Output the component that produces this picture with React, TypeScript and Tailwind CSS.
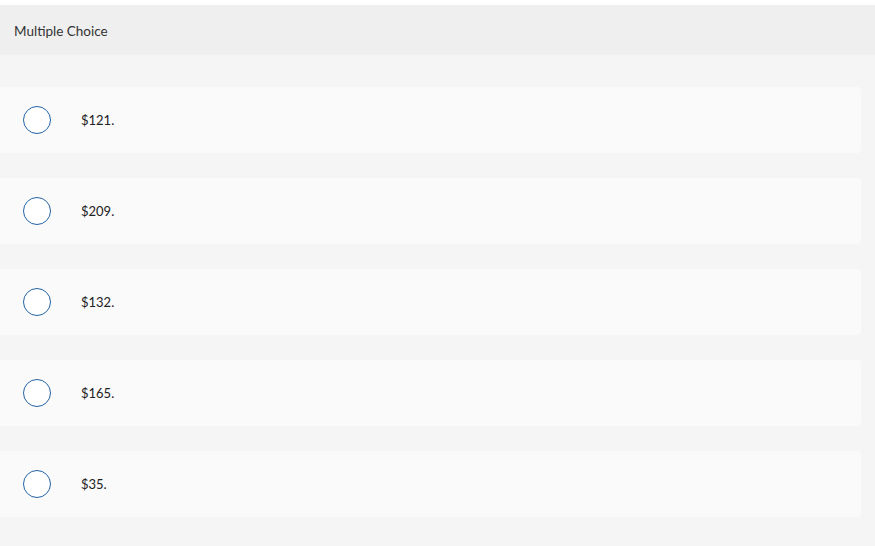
import React from "react";

const options = ["$121.", "$209.", "$132.", "$165.", "$35."];

export default function App() {
  return (
    <div
      className="w-[875px] h-[546px] bg-[#f5f5f5] overflow-hidden"
      style={{ fontFamily: '"Lato", "Open Sans", Arial, sans-serif' }}
    >
      <div className="h-[5px] bg-white" />
      <div className="h-[50px] bg-[#efefef] flex items-center pl-[14px] pt-[2px] text-[13.5px] text-[#333333]">
        Multiple Choice
      </div>
      <div className="flex flex-col gap-[25px] pt-[32px] pr-[14px]">
        {options.map((o) => (
          <div
            key={o}
            className="h-[66px] bg-[#fafafa] rounded-r-[4px] flex items-center pl-[23px]"
          >
            <div className="w-[28px] h-[28px] rounded-full border-[1.5px] border-[#2363a6] bg-white shrink-0" />
            <div className="ml-[30px] pt-[1px] text-[13px] text-[#222222]">{o}</div>
          </div>
        ))}
      </div>
    </div>
  );
}
